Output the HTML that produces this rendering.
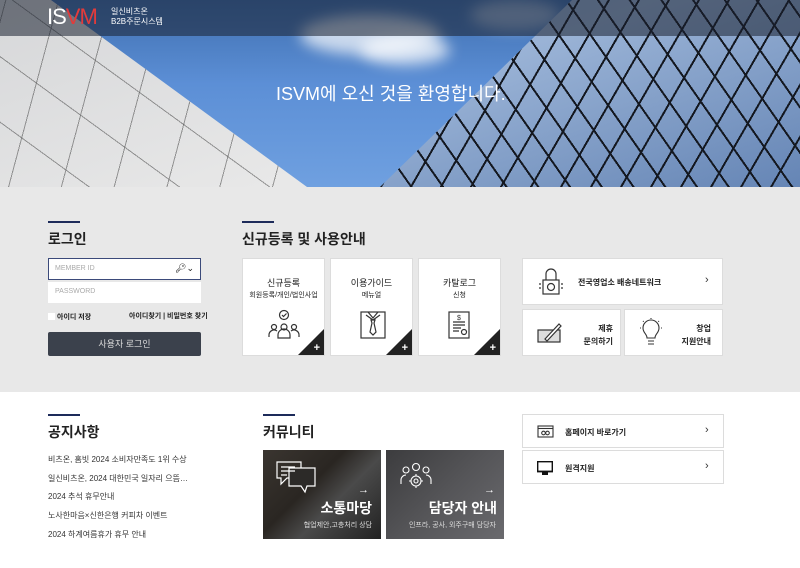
<!DOCTYPE html>
<html><head><meta charset="utf-8"><style>
*{margin:0;padding:0;box-sizing:border-box}
body{width:800px;height:568px;overflow:hidden;font-family:"Liberation Sans","Noto Sans CJK KR",sans-serif;background:#fff;color:#222;position:relative}
.abs{position:absolute}
.hero{left:0;top:0;width:800px;height:187px;background:linear-gradient(180deg,#3f6fb0 0%,#5c8fd6 45%,#6fa0e0 100%);overflow:hidden}
.cloud{border-radius:50%;background:rgba(255,255,255,.7);filter:blur(7px)}
.lb{left:0;top:0;width:800px;height:187px;clip-path:polygon(0 0,51px 0,307px 187px,0 187px);
background:repeating-linear-gradient(36deg,transparent 0 52px,rgba(90,90,90,.6) 52px 53px),repeating-linear-gradient(-75deg,transparent 0 50px,rgba(90,90,90,.6) 50px 51px),linear-gradient(160deg,#d6d7d9,#e8e8e8 60%,#f2f2f2)}
.rb{left:0;top:0;width:800px;height:187px;clip-path:polygon(380px 187px,572px 0,800px 0,800px 187px);
background:repeating-linear-gradient(55deg,transparent 0 24px,#141820 24px 26px),repeating-linear-gradient(-60deg,transparent 0 24px,#141820 24px 26px),linear-gradient(160deg,#7f9cc6,#9ab3d6 50%,#6585b5)}
.hdr{left:0;top:0;width:800px;height:36px;background:rgba(25,32,48,.55)}
.grey{left:0;top:187px;width:800px;height:205px;background:#e8e8e8}
.bar{width:32px;height:2px;background:#1d2b5a}
.h2{font-size:14px;font-weight:bold;color:#222}
.card{background:#fff;border:1px solid #dcdcdc}
.tri{position:absolute;right:0;bottom:0;width:0;height:0;border-left:26px solid transparent;border-bottom:26px solid #222}
.plus{position:absolute;right:4px;bottom:1px;color:#fff;font-size:11px;font-weight:bold}
.ct{font-size:8px;text-align:center;width:100%}
.notice{font-size:8px;color:#333;left:48px}
.chev{font-size:11px;color:#333}
</style></head><body>
<div class="abs hero">
 <div class="abs cloud" style="left:300px;top:15px;width:140px;height:40px"></div>
 <div class="abs cloud" style="left:360px;top:35px;width:90px;height:30px"></div>
 <div class="abs cloud" style="left:470px;top:0px;width:90px;height:30px;opacity:.6"></div>
</div>
<div class="abs lb"></div>
<div class="abs rb"></div>
<div class="abs hdr"></div>
<div class="abs" style="left:47px;top:4px;font-size:22px;color:#fff;letter-spacing:-1px;font-weight:300">IS<span style="color:#e23b3b">VM</span></div>
<div class="abs" style="left:111px;top:7px;font-size:8px;color:#fff;line-height:10px">일신비츠온<br>B2B주문시스템</div>
<div class="abs" style="left:276px;top:80px;font-size:18px;color:#fff">ISVM에 오신 것을 환영합니다.</div>

<div class="abs grey"></div>
<div class="abs bar" style="left:48px;top:221px"></div>
<div class="abs h2" style="left:48px;top:229px">로그인</div>
<div class="abs" style="left:48px;top:258px;width:153px;height:22px;background:#fff;border:1px solid #3b4a7a;font-size:7px;color:#aaa;padding:6px 6px">MEMBER ID<span style="position:absolute;right:6px;top:4px;color:#222;font-size:9px">🔑︎⌄</span></div>
<div class="abs" style="left:48px;top:282px;width:153px;height:21px;background:#fff;font-size:7px;color:#aaa;padding:6px 7px">PASSWORD</div>
<div class="abs" style="left:48px;top:313px;width:7px;height:7px;background:#fff"></div>
<div class="abs" style="left:57px;top:312px;font-size:7px;font-weight:bold">아이디 저장</div>
<div class="abs" style="left:129px;top:311px;font-size:7px;font-weight:bold">아이디찾기 | 비밀번호 찾기</div>
<div class="abs" style="left:48px;top:332px;width:153px;height:24px;background:#3b414c;border-radius:2px;color:#ddd;font-size:9px;text-align:center;line-height:24px">사용자 로그인</div>

<div class="abs bar" style="left:242px;top:221px"></div>
<div class="abs h2" style="left:242px;top:229px">신규등록 및 사용안내</div>

<div class="abs card" style="left:242px;top:258px;width:83px;height:98px">
 <div class="abs ct" style="top:17px;font-size:9px">신규등록</div>
 <div class="abs ct" style="top:31px;font-size:7px">회원등록/개인/법인사업</div>
 <svg class="abs" style="left:25px;top:50px" width="32" height="30" viewBox="0 0 32 30" fill="none" stroke="#333" stroke-width="1.2"><circle cx="16" cy="6" r="4.5"/><path d="M14 6l1.5 1.5 3-3"/><circle cx="16" cy="18" r="3"/><path d="M10 29v-3a6 6 0 0112 0v3z"/><circle cx="6" cy="18" r="2.5"/><path d="M1 28v-2a5 5 0 018-4"/><circle cx="26" cy="18" r="2.5"/><path d="M31 28v-2a5 5 0 00-8-4"/></svg>
 <div class="tri"></div><div class="plus">+</div>
</div>
<div class="abs card" style="left:330px;top:258px;width:83px;height:98px">
 <div class="abs ct" style="top:17px;font-size:9px">이용가이드</div>
 <div class="abs ct" style="top:31px;font-size:7px">메뉴얼</div>
 <svg class="abs" style="left:29px;top:52px" width="26" height="28" viewBox="0 0 26 28" fill="none" stroke="#333" stroke-width="1.2"><rect x="1" y="1" width="24" height="26"/><path d="M8 1l5 6 5-6M6 4l7 5 7-5M11 9h4l-1 3 2 9-3 3-3-3 2-9z"/></svg>
 <div class="tri"></div><div class="plus">+</div>
</div>
<div class="abs card" style="left:418px;top:258px;width:83px;height:98px">
 <div class="abs ct" style="top:17px;font-size:9px">카탈로그</div>
 <div class="abs ct" style="top:31px;font-size:7px">신청</div>
 <svg class="abs" style="left:29px;top:52px" width="22" height="28" viewBox="0 0 22 28" fill="none" stroke="#333" stroke-width="1.2"><rect x="1" y="1" width="20" height="26"/><path d="M5 11h12M5 14h12M5 17h8M5 20h6"/><text x="9" y="9" font-size="7" fill="#333" stroke="none">$</text><circle cx="16" cy="21" r="2.5"/></svg>
 <div class="tri"></div><div class="plus">+</div>
</div>

<div class="abs card" style="left:522px;top:258px;width:201px;height:47px">
 <svg class="abs" style="left:15px;top:8px" width="26" height="30" viewBox="0 0 26 30" fill="none" stroke="#333" stroke-width="1.2"><path d="M8 13V7a5 5 0 0110 0v6"/><rect x="5" y="13" width="16" height="14"/><circle cx="13" cy="20" r="3.5"/><path d="M1 17h2M1 21h2M23 17h2M23 21h2"/></svg>
 <div class="abs" style="left:55px;top:18px;font-size:8px;font-weight:bold">전국영업소 배송네트워크</div>
 <div class="abs chev" style="left:182px;top:15px">›</div>
</div>
<div class="abs card" style="left:522px;top:309px;width:99px;height:47px">
 <svg class="abs" style="left:14px;top:12px" width="26" height="22" viewBox="0 0 26 22" fill="none" stroke="#333" stroke-width="1.2"><rect x="1" y="8" width="22" height="12" fill="#ddd"/><path d="M8 17l14-15 2 2-14 15z" fill="#fff"/></svg>
 <div class="abs" style="left:50px;top:12px;font-size:8px;font-weight:bold;text-align:right;width:40px;line-height:13px;white-space:nowrap">제휴<br>문의하기</div>
</div>
<div class="abs card" style="left:624px;top:309px;width:99px;height:47px">
 <svg class="abs" style="left:14px;top:8px" width="24" height="30" viewBox="0 0 24 30" fill="none" stroke="#333" stroke-width="1.1"><path d="M8 20c0-4-4-5-4-10a8 8 0 0116 0c0 5-4 6-4 10z"/><path d="M9 23h6M9 26h6"/><path d="M1 10h1M22 10h1M4 3l1 1M20 3l-1 1M12 0v1" stroke-dasharray="1 1"/></svg>
 <div class="abs" style="left:46px;top:12px;font-size:8px;font-weight:bold;text-align:right;width:40px;line-height:13px;white-space:nowrap">창업<br>지원안내</div>
</div>

<div class="abs bar" style="left:48px;top:414px"></div>
<div class="abs h2" style="left:48px;top:422px">공지사항</div>
<div class="abs notice" style="top:454px">비츠온, 홈빗 2024 소비자만족도 1위 수상</div>
<div class="abs notice" style="top:473px">일신비츠온, 2024 대한민국 일자리 으뜸…</div>
<div class="abs notice" style="top:491px">2024 추석 휴무안내</div>
<div class="abs notice" style="top:510px">노사한마음×신한은행 커피차 이벤트</div>
<div class="abs notice" style="top:529px">2024 하계여름휴가 휴무 안내</div>

<div class="abs bar" style="left:263px;top:414px"></div>
<div class="abs h2" style="left:263px;top:422px">커뮤니티</div>
<div class="abs" style="left:263px;top:450px;width:118px;height:89px;background:linear-gradient(135deg,#3a3530,#2a2622 40%,#4a4a4a 60%,#222);overflow:hidden">
 <svg class="abs" style="left:12px;top:10px" width="44" height="38" viewBox="0 0 44 38" fill="none" stroke="#fff" stroke-width="1.2"><path d="M2 2h24v16H12l-6 6v-6H2z"/><path d="M14 8h26v18h-8l-2 6-4-6H14z" fill="#2c2a28"/><path d="M6 7h14M6 11h14M6 15h6"/></svg>
 <div class="abs" style="right:12px;top:34px;color:#fff;font-size:11px">→</div>
 <div class="abs" style="right:9px;top:48px;color:#fff;font-size:14px;font-weight:bold">소통마당</div>
 <div class="abs" style="right:9px;top:70px;color:#ddd;font-size:7px">협업제안,고충처리 상담</div>
</div>
<div class="abs" style="left:386px;top:450px;width:118px;height:89px;background:linear-gradient(135deg,#3c3c3e,#555558 50%,#6a6a6e);overflow:hidden">
 <svg class="abs" style="left:14px;top:12px" width="32" height="28" viewBox="0 0 32 28" fill="none" stroke="#fff" stroke-width="1.1"><circle cx="16" cy="5" r="3.5"/><circle cx="6" cy="8" r="3"/><circle cx="26" cy="8" r="3"/><circle cx="16" cy="19" r="5"/><circle cx="16" cy="19" r="2"/><path d="M1 22v-4a5 5 0 015-5M31 22v-4a5 5 0 00-5-5M16 12v2M16 24v2M9 19h2M21 19h2"/></svg>
 <div class="abs" style="right:9px;top:34px;color:#fff;font-size:11px">→</div>
 <div class="abs" style="right:7px;top:48px;color:#fff;font-size:14px;font-weight:bold">담당자 안내</div>
 <div class="abs" style="right:8px;top:70px;color:#ddd;font-size:7px">인프라, 공사, 외주구매 담당자</div>
</div>

<div class="abs card" style="left:522px;top:414px;width:202px;height:34px">
 <svg class="abs" style="left:14px;top:10px" width="17" height="13" viewBox="0 0 17 13" fill="none" stroke="#333" stroke-width="1.1"><rect x="1" y="1" width="15" height="11"/><path d="M1 3.5h15"/><circle cx="6.5" cy="8" r="1.8"/><circle cx="10.5" cy="8" r="1.8"/></svg>
 <div class="abs" style="left:42px;top:12px;font-size:8px;font-weight:bold">홈페이지 바로가기</div>
 <div class="abs chev" style="left:182px;top:9px">›</div>
</div>
<div class="abs card" style="left:522px;top:450px;width:202px;height:34px">
 <svg class="abs" style="left:14px;top:10px" width="16" height="14" viewBox="0 0 16 14"><rect x="0.5" y="0.5" width="15" height="10" fill="none" stroke="#111" stroke-width="1.8"/><rect x="5" y="11" width="6" height="3" fill="#111"/></svg>
 <div class="abs" style="left:42px;top:12px;font-size:8px;font-weight:bold">원격지원</div>
 <div class="abs chev" style="left:182px;top:9px">›</div>
</div>
</body></html>
